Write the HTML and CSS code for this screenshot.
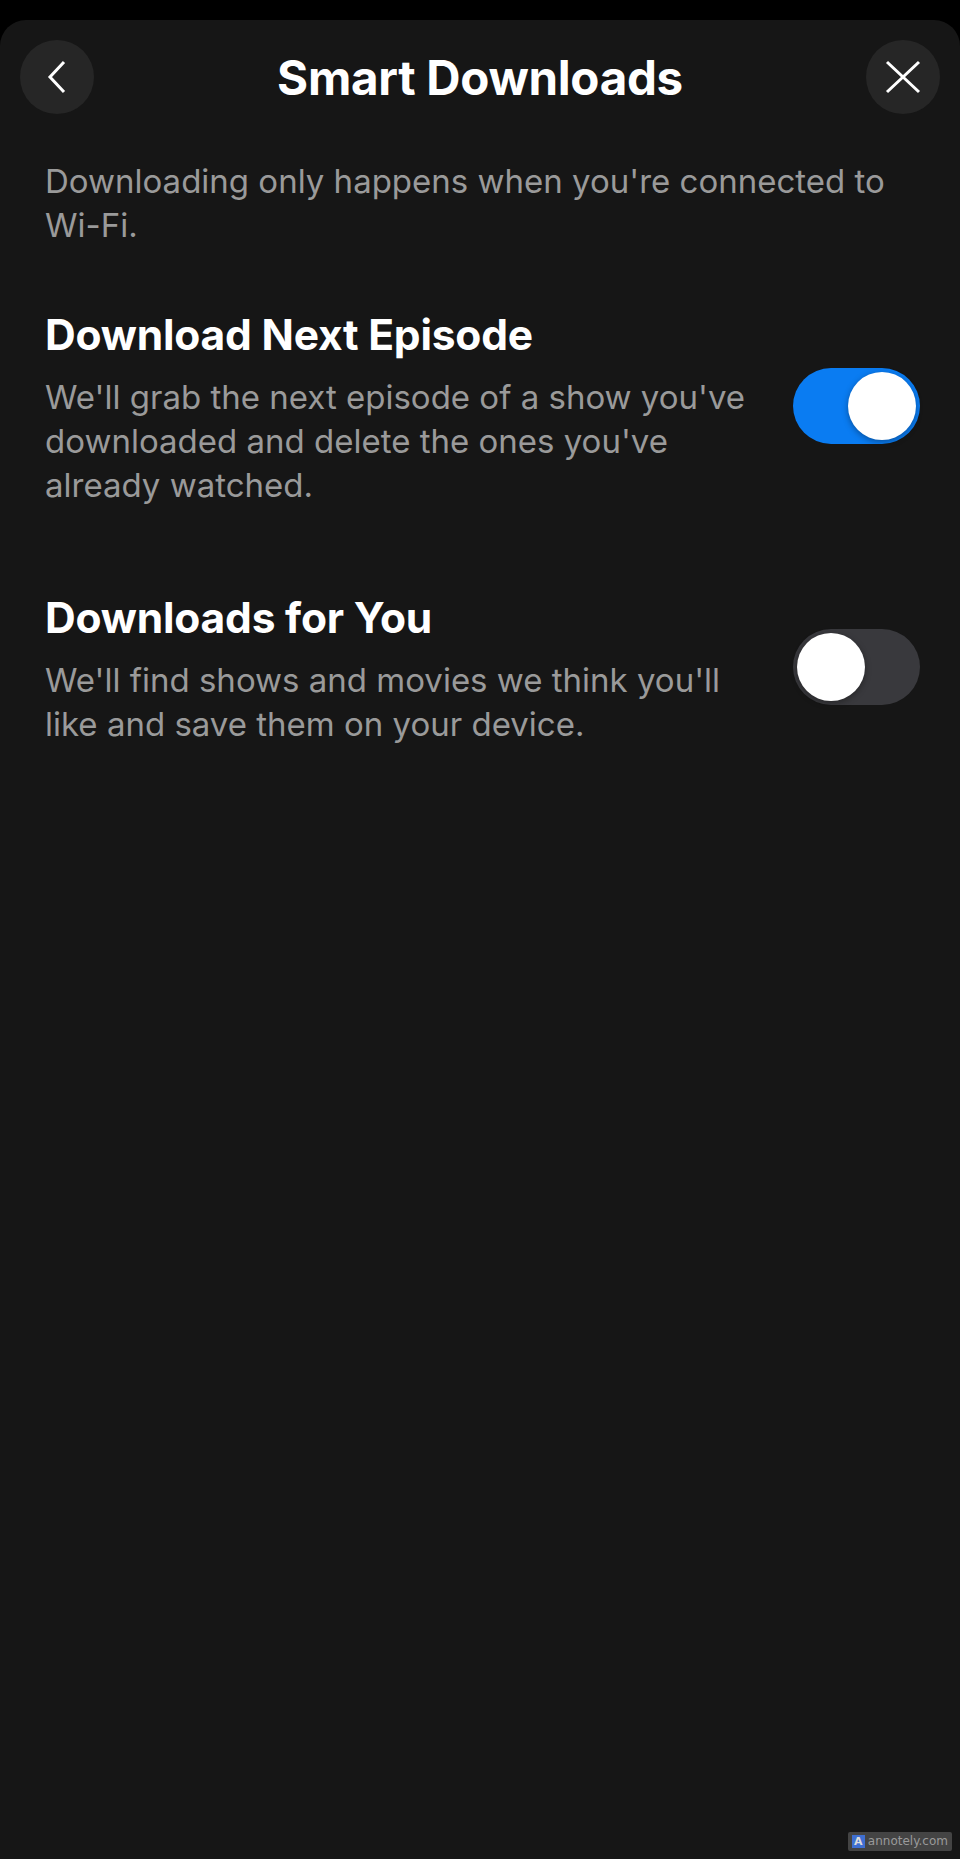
FILE: index.html
```html
<!DOCTYPE html>
<html lang="en">
<head>
    <meta charset="UTF-8">
    <meta name="viewport" content="width=device-width, initial-scale=1.0">
    <title>Smart Downloads</title>
    <link rel="stylesheet" href="styles.css">
</head>
<body>
    <div class="statusbar"></div>
    <div class="sheet">
        <div class="header">
            <button class="round-btn" aria-label="Back">
                <svg width="36" height="36" viewBox="0 0 36 36">
                    <path d="M25 3 L11 18 L25 33" fill="none" stroke="#fff" stroke-width="3" stroke-linecap="butt" stroke-linejoin="miter"/>
                </svg>
            </button>
            <h1>Smart Downloads</h1>
            <button class="round-btn" aria-label="Close">
                <svg width="36" height="36" viewBox="0 0 36 36">
                    <path d="M2 3 L34 33 M34 3 L2 33" fill="none" stroke="#fff" stroke-width="3"/>
                </svg>
            </button>
        </div>

        <p class="intro">Downloading only happens when you're connected to Wi-Fi.</p>

        <div class="option">
            <div class="option-text">
                <h2>Download Next Episode</h2>
                <p>We'll grab the next episode of a show you've downloaded and delete the ones you've already watched.</p>
            </div>
            <div class="toggle on"><span class="knob"></span></div>
        </div>

        <div class="option">
            <div class="option-text">
                <h2>Downloads for You</h2>
                <p>We'll find shows and movies we think you'll like and save them on your device.</p>
            </div>
            <div class="toggle"><span class="knob"></span></div>
        </div>
    </div>

    <div class="watermark"><span class="wm-logo">A</span>annotely.com</div>
</body>
</html>
```

FILE: styles.css
```css
body {
    margin: 0;
    background: #000;
    font-family: Inter, "Noto Sans", sans-serif;
    color: #fff;
    height: 1859px;
    overflow: hidden;
    position: relative;
}
.statusbar {
    height: 20px;
    background: #000;
}
.sheet {
    background: #161616;
    border-radius: 26px 26px 0 0;
    height: 1839px;
    padding: 20px 40px 0 45px;
    box-sizing: border-box;
}
.header {
    display: flex;
    align-items: center;
    justify-content: space-between;
    margin: 0 -20px 0 -25px;
}
.round-btn {
    width: 74px;
    height: 74px;
    border-radius: 50%;
    border: none;
    background: #262626;
    padding: 0;
    display: flex;
    align-items: center;
    justify-content: center;
}
.header h1 {
    margin: 0;
    font-size: 47.5px;
    font-weight: 700;
    letter-spacing: -0.3px;
}
.intro {
    margin: 45px 0 0 0;
    font-size: 33px;
    line-height: 44px;
    color: #9a9a9a;
    padding-right: 30px;
}
.option {
    display: flex;
    align-items: center;
    justify-content: space-between;
    margin-top: 64px;
}
.option + .option {
    margin-top: 87px;
}
.option-text {
    width: 705px;
}
.option h2 {
    margin: 0;
    font-size: 42.5px;
    line-height: 48px;
    font-weight: 700;
    letter-spacing: -0.2px;
}
.option p {
    margin: 16px 0 0 0;
    font-size: 33px;
    line-height: 44px;
    color: #9a9a9a;
}
.toggle {
    width: 127px;
    height: 76px;
    border-radius: 38px;
    background: #39393d;
    padding: 4px;
    box-sizing: border-box;
    display: flex;
    justify-content: flex-start;
    margin-bottom: 6px;
}
.toggle.on {
    background: #0a7cf2;
    justify-content: flex-end;
}
.knob {
    width: 68px;
    height: 68px;
    border-radius: 50%;
    background: #fff;
    box-shadow: 0 2px 6px rgba(0, 0, 0, 0.35);
}
.watermark {
    position: absolute;
    right: 8px;
    bottom: 8px;
    background: #444;
    color: #9a9a9a;
    font-family: "DejaVu Sans", sans-serif;
    font-size: 12px;
    line-height: 19px;
    padding: 0 4px;
    border-radius: 2px;
    display: flex;
    align-items: center;
    gap: 3px;
}
.wm-logo {
    width: 13px;
    height: 13px;
    background: #3f6fd1;
    color: #ddd;
    font-size: 11px;
    line-height: 13px;
    text-align: center;
    font-weight: 700;
}
```
